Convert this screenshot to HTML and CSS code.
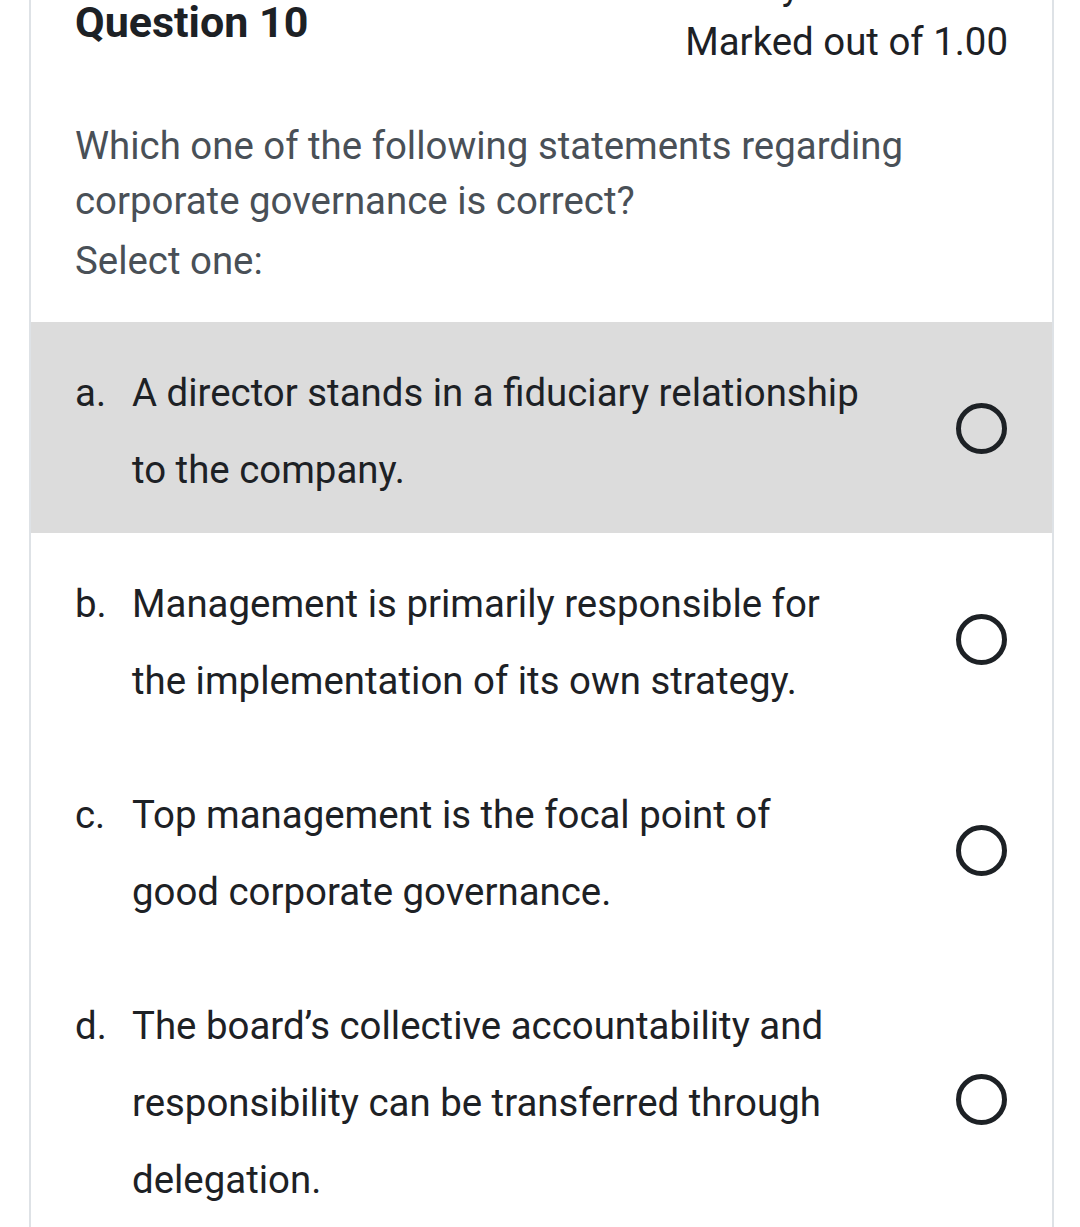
FILE: index.html
```html
<!DOCTYPE html>
<html>
<head>
<meta charset="utf-8">
<link rel="stylesheet" href="styles.css">
</head>
<body>
<div class="card">
  <div class="header">
    <h3 class="qno">Question 10</h3>
    <div class="info">
      <div class="state">Not yet answered</div>
      <div class="grade">Marked out of 1.00</div>
    </div>
  </div>
  <div class="qtext">
    <p class="prompt">Which one of the following statements regarding corporate governance is correct?</p>
    <p class="select">Select one:</p>
  </div>
  <div class="answers">
    <div class="option active">
      <span class="letter">a.</span>
      <span class="label">A director stands in a fiduciary relationship to the company.</span>
      <span class="radio"></span>
    </div>
    <div class="option">
      <span class="letter">b.</span>
      <span class="label">Management is primarily responsible for the implementation of its own strategy.</span>
      <span class="radio"></span>
    </div>
    <div class="option">
      <span class="letter">c.</span>
      <span class="label">Top management is the focal point of good corporate governance.</span>
      <span class="radio"></span>
    </div>
    <div class="option">
      <span class="letter">d.</span>
      <span class="label">The board’s collective accountability and responsibility can be transferred through delegation.</span>
      <span class="radio"></span>
    </div>
  </div>
</div>
</body>
</html>
```

FILE: styles.css
```css
html, body {
  margin: 0;
  padding: 0;
  background: #ffffff;
  overflow: hidden;
}
body {
  font-family: Roboto, "Liberation Sans", sans-serif;
  color: #1d2125;
}
.card {
  margin: -42px 0 0 29px;
  width: 1021px;
  border-left: 2px solid #dee2e6;
  border-right: 2px solid #dee2e6;
  min-height: 1400px;
}
.header {
  display: flex;
  justify-content: space-between;
  align-items: flex-start;
  padding: 0 44px 0 44px;
}
.qno {
  margin: 36px 0 0 0;
  font-size: 43px;
  font-weight: 700;
  line-height: 56px;
  color: #1d2125;
}
.info {
  text-align: right;
  font-size: 38.4px;
  line-height: 56px;
  color: #1d2125;
}
.qtext {
  padding: 48px 44px 20px 44px;
  color: #495057;
  font-size: 38.4px;
}
.prompt {
  margin: 0;
  line-height: 55px;
}
.select {
  margin: 5px 0 0 0;
  line-height: 56px;
}
.answers {
  margin-top: 13px;
}
.option {
  display: flex;
  align-items: center;
  padding: 32px 0 25px 44px;
  font-size: 38.4px;
  line-height: 77px;
}
.option.active {
  background: #dcdcdc;
}
.letter {
  align-self: flex-start;
  width: 57px;
  flex: none;
}
.label {
  flex: 1;
  padding-right: 93px;
}
.radio {
  flex: none;
  width: 41px;
  height: 41px;
  border: 5px solid #1d2125;
  border-radius: 50%;
  margin-right: 45px;
  margin-top: -6px;
}
```
